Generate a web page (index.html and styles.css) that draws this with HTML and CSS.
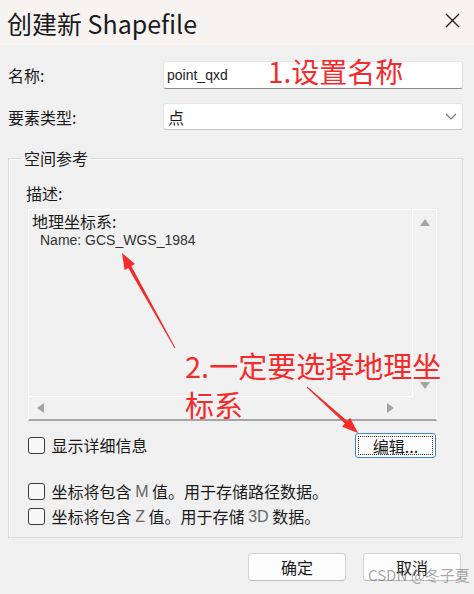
FILE: index.html
```html
<!DOCTYPE html>
<html lang="zh-CN">
<head>
    <meta charset="UTF-8">
    <meta name="viewport" content="width=device-width, initial-scale=1.0">
    <title>创建新 Shapefile</title>
    <link rel="stylesheet" href="styles.css">
</head>
<body>
    <div class="dialog">
        <div class="titlebar">
            <span class="title">创建新 Shapefile</span>
            <svg class="close" width="15" height="15" viewBox="0 0 15 15">
                <path d="M1 1 L14 14 M14 1 L1 14" stroke="#222" stroke-width="1.4" fill="none"/>
            </svg>
        </div>

        <div class="form">
            <div class="field">
                <label for="name">名称:</label>
                <input type="text" id="name" class="text-input" value="point_qxd">
            </div>
            <div class="field field-type">
                <label>要素类型:</label>
                <div class="select">
                    <span>点</span>
                    <svg width="12" height="7" viewBox="0 0 12 7">
                        <path d="M1 1 L6 6 L11 1" stroke="#777" stroke-width="1.2" fill="none"/>
                    </svg>
                </div>
            </div>

            <fieldset class="group">
                <legend>空间参考</legend>
                <div class="desc-label">描述:</div>
                <div class="desc-box">
                    <div class="desc-text">
                        <div class="desc-title">地理坐标系:</div>
                        <div class="desc-name">Name: GCS_WGS_1984</div>
                    </div>
                    <div class="vscroll">
                        <span class="tri tri-up"></span>
                        <span class="tri tri-down"></span>
                    </div>
                    <div class="hscroll">
                        <span class="tri tri-left"></span>
                        <span class="tri tri-right"></span>
                    </div>
                    <div class="corner"></div>
                </div>

                <div class="detail-row">
                    <label class="check"><input type="checkbox"> 显示详细信息</label>
                    <button class="edit-btn" type="button"><span>编辑...</span></button>
                </div>

                <div class="options">
                    <label class="check"><input type="checkbox"> 坐标将包含 <em>M</em> 值。用于存储路径数据。</label>
                    <label class="check"><input type="checkbox"> 坐标将包含 <em>Z</em> 值。用于存储 <em>3D</em> 数据。</label>
                </div>
            </fieldset>

            <div class="actions">
                <button type="button">确定</button>
                <button type="button">取消</button>
            </div>
        </div>

        <!-- 标注 -->
        <div class="note note-1">1.设置名称</div>
        <div class="note note-2">2.一定要选择地理坐<br>标系</div>
        <svg class="arrows" width="474" height="594" viewBox="0 0 474 594">
            <polygon fill="#f52a2a" points="175.4,347.8 131.3,266.1 135.0,264.1 122,253 124.6,269.9 128.3,267.9 174.6,348.2"/>
            <polygon fill="#f52a2a" points="307.3,386.6 347.3,421.0 350.1,417.8 358,433 342.1,426.8 344.9,423.6 306.7,387.4"/>
        </svg>
        <div class="watermark">CSDN @冬子夏</div>
    </div>
</body>
</html>
```

FILE: styles.css
```css
body {
    margin: 0;
    font-family: "Noto Sans CJK SC", "Noto Sans", sans-serif;
    color: #1a1a1a;
    background: #f0f0f0;
}
.dialog {
    position: relative;
    width: 474px;
    height: 594px;
    overflow: hidden;
    background: #f0f0f0;
}
.titlebar {
    height: 45px;
    display: flex;
    justify-content: space-between;
    align-items: center;
    padding: 0 14px 0 7px;
    background: #f7f3f1;
}
.title {
    font-size: 25px;
    line-height: 30px;
    margin-top: 1px;
}
.close {
    margin-top: -4px;
}
.form {
    padding: 16px 11px 0 8px;
}
.field {
    display: flex;
    align-items: center;
    font-size: 16px;
}
.field label {
    width: 155px;
}
.field-type {
    margin-top: 14px;
}
.text-input {
    flex: 1;
    height: 28px;
    box-sizing: border-box;
    margin: 0;
    padding: 0 3px;
    border: 1px solid #e4e4e4;
    border-bottom-color: #8a8a8a;
    border-radius: 3px;
    background: #fff;
    font-family: "Liberation Sans", Arial, sans-serif;
    font-size: 14px;
    color: #222;
    outline: none;
}
.select {
    flex: 1;
    height: 27px;
    box-sizing: border-box;
    display: flex;
    justify-content: space-between;
    align-items: center;
    padding: 0 5px 0 4px;
    border: 1px solid #e4e4e4;
    border-bottom-color: #c4c4c4;
    border-radius: 3px;
    background: #fff;
}
.group {
    margin: 17px 0 0;
    padding: 13px 25px 8px 19px;
    border: 1px solid #d9d9d9;
    box-shadow: inset 1px 1px 0 #fbfbfb;
    min-width: 0;
}
.group legend {
    margin-left: -6px;
    padding: 0 2px;
    font-size: 16px;
    line-height: 22px;
}
.desc-label {
    font-size: 16px;
    line-height: 22px;
    margin-left: -2px;
}
.desc-box {
    margin-top: 5px;
    height: 212px;
    box-sizing: border-box;
    display: grid;
    grid-template-columns: 1fr 23px;
    grid-template-rows: 1fr 22px;
    border: 1px solid #fff;
    border-bottom: 2px solid #a6a6a6;
    background: #f1f1f1;
}
.desc-text {
    padding: 1px 3px;
    border-right: 1px solid #fff;
    border-bottom: 1px solid #fff;
}
.desc-title {
    font-size: 16px;
    line-height: 21px;
}
.desc-name {
    padding-left: 8px;
    font-family: "Liberation Sans", Arial, sans-serif;
    font-size: 14px;
    line-height: 16px;
    color: #333;
}
.vscroll {
    display: flex;
    flex-direction: column;
    justify-content: space-between;
    align-items: center;
    padding: 9px 0 8px;
}
.hscroll {
    display: flex;
    justify-content: space-between;
    align-items: center;
    padding: 0 19px 0 8px;
}
.tri {
    width: 0;
    height: 0;
    border: 5px solid transparent;
}
.tri-up {
    border-bottom: 7px solid #a3a3a3;
    border-top-width: 0;
}
.tri-down {
    border-top: 7px solid #a3a3a3;
    border-bottom-width: 0;
}
.tri-left {
    border-right: 7px solid #a3a3a3;
    border-left-width: 0;
}
.tri-right {
    border-left: 7px solid #a3a3a3;
    border-right-width: 0;
}
.detail-row {
    display: flex;
    justify-content: space-between;
    align-items: center;
    margin-top: 12px;
}
.check {
    display: flex;
    align-items: center;
    font-size: 16px;
    line-height: 25px;
    white-space: pre;
}
.check input {
    appearance: none;
    width: 17px;
    height: 17px;
    margin: 0 3px 0 0;
    border: 1px solid #3a3a3a;
    border-radius: 3px;
    background: #f7f7f7;
}
.check em {
    font-style: normal;
    font-family: "Liberation Sans", Arial, sans-serif;
    color: #666;
}
.edit-btn {
    width: 81px;
    height: 25px;
    margin-right: 1px;
    padding: 2px;
    border: 1px solid #3d85d8;
    border-radius: 3px;
    background: #fdfdfd;
    font-family: inherit;
    font-size: 16px;
    color: #1a1a1a;
}
.edit-btn span {
    display: block;
    height: 100%;
    box-sizing: border-box;
    border: 1px dotted #333;
    line-height: 18px;
}
.options {
    margin-top: 21px;
}
.actions {
    display: flex;
    justify-content: flex-end;
    gap: 17px;
    margin-top: 15px;
    padding-right: 2px;
}
.actions button {
    width: 98px;
    height: 28px;
    border: 1px solid #d3d3d3;
    border-bottom-color: #bdbdbd;
    border-radius: 4px;
    background: #fdfdfd;
    font-family: inherit;
    font-size: 16px;
    color: #1a1a1a;
}
.note {
    position: absolute;
    color: #f52a2a;
    white-space: nowrap;
}
.note-1 {
    left: 268px;
    top: 57px;
    font-size: 28px;
    line-height: 28px;
}
.note-2 {
    left: 185px;
    top: 346px;
    font-size: 29px;
    line-height: 39px;
}
.arrows {
    position: absolute;
    left: 0;
    top: 0;
    pointer-events: none;
}
.watermark {
    position: absolute;
    left: 368px;
    top: 565px;
    font-size: 15px;
    line-height: 20px;
    color: rgba(110, 110, 110, 0.6);
}
```
